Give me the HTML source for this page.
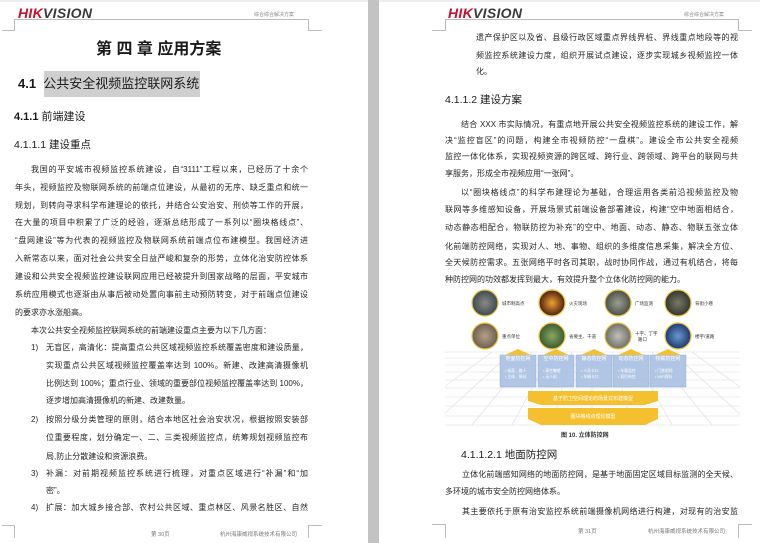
<!DOCTYPE html>
<html><head><meta charset="utf-8">
<style>
*{margin:0;padding:0;box-sizing:border-box}
body{width:760px;height:543px;background:#fff;position:relative;overflow:hidden;font-family:"Liberation Sans","Noto Sans CJK SC",sans-serif;color:#222}
.gap{position:absolute;left:368px;top:0;width:11px;height:543px;background:#c3c3c3}
.topbar{position:absolute;left:0;top:0;width:760px;height:2px;background:#eee}
.l{position:absolute;white-space:nowrap;font-size:8px;line-height:10px;text-align:justify;text-align-last:justify;color:#262626}
.n{text-align-last:left}
.logo{position:absolute;font-family:"Liberation Sans",sans-serif;font-weight:bold;font-style:italic;font-size:14px;letter-spacing:0.3px;line-height:14px}
.logo .r{color:#c8102e}.logo .g{color:#3a3a3a}
.ht{position:absolute;font-size:5px;color:#888;line-height:6px}
.hl{position:absolute;background:#bbb}
.ft{position:absolute;font-size:5.5px;color:#777;line-height:7px}
.h{position:absolute;white-space:nowrap;color:#1a1a1a}
</style></head><body>
<div class="topbar"></div>
<div class="gap"></div>

<!-- LEFT HEADER -->
<div class="logo" style="left:18px;top:6px"><span class="r">HIK</span><span class="g">VISION</span></div>
<div class="ht" style="left:254px;top:12px">综合综合解决方案</div>
<div class="hl" style="left:14px;top:19px;width:295px;height:1px"></div>
<div class="hl" style="left:14px;top:19px;width:1px;height:11px"></div>
<div class="hl" style="left:308px;top:19px;width:1px;height:11px"></div>
<div class="hl" style="left:2px;top:30px;width:13px;height:1px"></div>
<div class="hl" style="left:308px;top:30px;width:14px;height:1px"></div>

<div class="h" style="left:96px;top:40px;font-size:16px;font-weight:bold;line-height:20px">第 四 章 应用方案</div>
<div style="position:absolute;left:44px;top:71px;width:156px;height:26px;background:#cfcfcf"></div>
<div class="h" style="left:18px;top:76px;font-size:13px;line-height:16px"><b>4.1</b>&nbsp;&nbsp;公共安全视频监控联网系统</div>
<div class="h" style="left:14px;top:110px;font-size:11px;line-height:14px"><b>4.1.1</b> 前端建设</div>
<div class="h" style="left:14px;top:138px;font-size:10.5px;line-height:14px">4.1.1.1 建设重点</div>

<div class="l" style="left:31px;top:165px;width:277px">我国的平安城市视频监控系统建设，自“3111”工程以来，已经历了十余个</div>
<div class="l" style="left:15px;top:183px;width:293px">年头，视频监控及物联网系统的前端点位建设，从最初的无序、缺乏重点和统一</div>
<div class="l" style="left:15px;top:201px;width:293px">规划，到转向寻求科学布建理论的依托，并结合公安治安、刑侦等工作的开展，</div>
<div class="l" style="left:15px;top:218px;width:293px">在大量的项目中积累了广泛的经验，逐渐总结形成了一系列以“圈块格线点”、</div>
<div class="l" style="left:15px;top:236px;width:293px">“盘网建设”等为代表的视频监控及物联网系统前端点位布建模型。我国经济进</div>
<div class="l" style="left:15px;top:254px;width:293px">入新常态以来，面对社会公共安全日益严峻和复杂的形势，立体化治安防控体系</div>
<div class="l" style="left:15px;top:272px;width:293px">建设和公共安全视频监控建设联网应用已经被提升到国家战略的层面，平安城市</div>
<div class="l" style="left:15px;top:290px;width:293px">系统应用模式也逐渐由从事后被动处置向事前主动预防转变，对于前端点位建设</div>
<div class="l n" style="left:15px;top:308px">的要求亦水涨船高。</div>
<div class="l n" style="left:31px;top:326px">本次公共安全视频监控联网系统的前端建设重点主要为以下几方面：</div>
<div class="l n" style="left:31px;top:343px">1)</div>
<div class="l" style="left:46px;top:343px;width:262px">无盲区，高清化：提高重点公共区域视频监控系统覆盖密度和建设质量，</div>
<div class="l" style="left:46px;top:361px;width:262px">实现重点公共区域视频监控覆盖率达到 100%。新建、改建高清摄像机</div>
<div class="l" style="left:46px;top:379px;width:262px">比例达到 100%；重点行业、领域的重要部位视频监控覆盖率达到 100%，</div>
<div class="l n" style="left:46px;top:396px">逐步增加高清摄像机的新建、改建数量。</div>
<div class="l n" style="left:31px;top:415px">2)</div>
<div class="l" style="left:46px;top:415px;width:262px">按照分级分类管理的原则，结合本地区社会治安状况，根据按照安装部</div>
<div class="l" style="left:46px;top:433px;width:262px">位重要程度，划分确定一、二、三类视频监控点，统筹规划视频监控布</div>
<div class="l n" style="left:46px;top:452px">局,防止分散建设和资源浪费。</div>
<div class="l n" style="left:31px;top:469px">3)</div>
<div class="l" style="left:46px;top:469px;width:262px">补漏：对前期视频监控系统进行梳理，对重点区域进行“补漏”和“加</div>
<div class="l n" style="left:46px;top:486px">密”。</div>
<div class="l n" style="left:31px;top:503px">4)</div>
<div class="l" style="left:46px;top:503px;width:262px">扩展：加大城乡接合部、农村公共区域、重点林区、风景名胜区、自然</div>

<div class="hl" style="left:2px;top:525px;width:13px;height:1px"></div>
<div class="hl" style="left:14px;top:525px;width:1px;height:13px"></div>
<div class="hl" style="left:308px;top:525px;width:14px;height:1px"></div>
<div class="hl" style="left:308px;top:525px;width:1px;height:13px"></div>
<div class="ft" style="left:151px;top:532px">第 30页</div>
<div class="ft" style="left:220px;top:532px">杭州海康威视系统技术有限公司</div>

<!-- RIGHT HEADER -->
<div class="logo" style="left:448px;top:6px"><span class="r">HIK</span><span class="g">VISION</span></div>
<div class="ht" style="left:684px;top:12px">综合综合解决方案</div>
<div class="hl" style="left:445px;top:19px;width:294px;height:1px"></div>
<div class="hl" style="left:445px;top:19px;width:1px;height:11px"></div>
<div class="hl" style="left:738px;top:19px;width:1px;height:11px"></div>
<div class="hl" style="left:432px;top:30px;width:14px;height:1px"></div>
<div class="hl" style="left:738px;top:30px;width:14px;height:1px"></div>

<div class="l" style="left:476px;top:33px;width:262px">遗产保护区以及省、县级行政区域重点界线界桩、界线重点地段等的视</div>
<div class="l" style="left:476px;top:51px;width:262px">频监控系统建设力度，组织开展试点建设，逐步实现城乡视频监控一体</div>
<div class="l n" style="left:476px;top:67px">化。</div>
<div class="h" style="left:445px;top:93px;font-size:10.5px;line-height:14px">4.1.1.2 建设方案</div>
<div class="l" style="left:461px;top:120px;width:277px">结合 XXX 市实际情况，有重点地开展公共安全视频监控系统的建设工作，解</div>
<div class="l" style="left:445px;top:136px;width:293px">决“监控盲区”的问题，构建全市视频防控“一盘棋”。建设全市公共安全视频</div>
<div class="l" style="left:445px;top:152px;width:293px">监控一体化体系，实现视频资源的跨区域、跨行业、跨领域、跨平台的联网与共</div>
<div class="l n" style="left:445px;top:169px">享服务，形成全市视频应用“一张网”。</div>
<div class="l" style="left:461px;top:188px;width:277px">以“圈块格线点”的科学布建理论为基础，合理运用各类前沿视频监控及物</div>
<div class="l" style="left:445px;top:205px;width:293px">联网等多维感知设备，开展场景式前端设备部署建设，构建“空中地面相结合，</div>
<div class="l" style="left:445px;top:223px;width:293px">动态静态相配合，物联防控为补充”的空中、地面、动态、静态、物联五张立体</div>
<div class="l" style="left:445px;top:242px;width:293px">化前端防控网络，实现对人、地、事物、组织的多维度信息采集，解决全方位、</div>
<div class="l" style="left:445px;top:258px;width:293px">全天候防控需求。五张网络平时各司其职，战时协同作战，通过有机结合，将每</div>
<div class="l n" style="left:445px;top:275px">种防控网的功效都发挥到最大，有效提升整个立体化防控网的能力。</div>

<svg style="position:absolute;left:445px;top:288px" width="295" height="142" viewBox="0 0 295 142" font-family="Liberation Sans,Noto Sans CJK SC,sans-serif">
<defs>
<radialGradient id="c1"><stop offset="0" stop-color="#8a8a80"/><stop offset="1" stop-color="#3c4a55"/></radialGradient>
<radialGradient id="c2"><stop offset="0" stop-color="#f2a030"/><stop offset="1" stop-color="#4a2010"/></radialGradient>
<radialGradient id="c3"><stop offset="0" stop-color="#9aa090"/><stop offset="1" stop-color="#4a5048"/></radialGradient>
<radialGradient id="c4"><stop offset="0" stop-color="#7a7868"/><stop offset="1" stop-color="#303830"/></radialGradient>
<radialGradient id="c5"><stop offset="0" stop-color="#b8a088"/><stop offset="1" stop-color="#6a6050"/></radialGradient>
<radialGradient id="c6"><stop offset="0" stop-color="#8aa860"/><stop offset="1" stop-color="#3a5a30"/></radialGradient>
<radialGradient id="c7"><stop offset="0" stop-color="#c0c0b8"/><stop offset="1" stop-color="#707068"/></radialGradient>
<radialGradient id="c8"><stop offset="0" stop-color="#6a9ad0"/><stop offset="1" stop-color="#1a3a70"/></radialGradient>
</defs>
<g stroke="#dcdcdc" stroke-width="0.6">
<line x1="0" y1="64" x2="295" y2="64"/><line x1="0" y1="70" x2="295" y2="70"/><line x1="0" y1="77" x2="295" y2="77"/><line x1="0" y1="84" x2="295" y2="84"/><line x1="0" y1="92" x2="295" y2="92"/><line x1="0" y1="100" x2="295" y2="100"/><line x1="0" y1="109" x2="295" y2="109"/><line x1="0" y1="118" x2="295" y2="118"/><line x1="0" y1="128" x2="295" y2="128"/><line x1="0" y1="137" x2="295" y2="137"/>
<line x1="147" y1="64" x2="147" y2="137"/><line x1="127" y1="64" x2="107" y2="137"/><line x1="107" y1="64" x2="67" y2="137"/><line x1="87" y1="64" x2="27" y2="137"/><line x1="67" y1="64" x2="-13" y2="137"/><line x1="47" y1="64" x2="-53" y2="137"/><line x1="167" y1="64" x2="187" y2="137"/><line x1="187" y1="64" x2="227" y2="137"/><line x1="207" y1="64" x2="267" y2="137"/><line x1="227" y1="64" x2="307" y2="137"/><line x1="247" y1="64" x2="347" y2="137"/>
</g>
<g stroke="#f0c040" stroke-width="1.2">
<circle cx="40" cy="15" r="13" fill="url(#c1)"/><circle cx="107" cy="15" r="13" fill="url(#c2)"/><circle cx="173" cy="15" r="13" fill="url(#c3)"/><circle cx="233" cy="15" r="13" fill="url(#c4)"/>
<circle cx="40" cy="48" r="13" fill="url(#c5)"/><circle cx="107" cy="48" r="13" fill="url(#c6)"/><circle cx="173" cy="48" r="13" fill="url(#c7)"/><circle cx="233" cy="48" r="13" fill="url(#c8)"/>
</g>
<g font-size="4.5" fill="#333">
<text x="57" y="17">城市制高点</text><text x="124" y="17">火灾现场</text><text x="190" y="17">广场监测</text><text x="250" y="17">背街小巷</text>
<text x="57" y="50">重点单位</text><text x="124" y="50">省要主、干道</text><text x="190" y="47">十字、丁字</text><text x="193" y="53">路口</text><text x="250" y="50">楼宇/道路</text>
</g>
<g fill="#a9c0e2" stroke="#8aa6d0" stroke-width="0.5" opacity="0.9">
<rect x="55" y="67" width="36" height="32"/><rect x="93" y="67" width="36" height="32"/><rect x="131" y="67" width="36" height="32"/><rect x="168" y="67" width="36" height="32"/><rect x="205" y="67" width="36" height="32"/>
</g>
<g fill="#f5c030">
<polygon points="60,67 73,61 86,67"/><polygon points="98,67 111,61 124,67"/><polygon points="136,67 149,61 162,67"/><polygon points="173,67 186,61 199,67"/><polygon points="210,67 223,61 236,67"/>
<polygon points="83,103 213,103 213,113 200,117 96,117 83,113"/>
<polygon points="83,120 213,120 213,131 200,137 96,137 83,131"/>
</g>
<g font-size="5" fill="#fff" text-anchor="middle">
<text x="73" y="72">地面防控网</text><text x="111" y="72">空中防控网</text><text x="149" y="72">静态防控网</text><text x="186" y="72">动态防控网</text><text x="223" y="72">物联防控网</text>
<text x="148" y="112">基于防卫空间理论的场景式布建模型</text><text x="148" y="130">圈块格线点理论模型</text>
</g>
<g font-size="3.8" fill="#fff">
<text x="60" y="84">• 街面、路人</text><text x="60" y="90">• 主体、驿站</text>
<text x="98" y="84">• 高空瞭望</text><text x="98" y="90">• 无人机</text>
<text x="136" y="84">• 人员卡口</text><text x="136" y="90">• 车辆卡口</text>
<text x="173" y="84">• 车载监控</text><text x="173" y="90">• 双目布控</text>
<text x="210" y="84">• 门禁视频</text><text x="210" y="90">• WiFi探针</text>
</g>
</svg>

<div class="h" style="left:561px;top:432px;font-size:6px;line-height:8px;font-weight:bold;color:#333">图 10. 立体防控网</div>
<div class="h" style="left:461px;top:448px;font-size:10.5px;line-height:14px">4.1.1.2.1 地面防控网</div>
<div class="l" style="left:462px;top:470px;width:276px">立体化前端感知网络的地面防控网，是基于地面固定区域目标监测的全天候、</div>
<div class="l n" style="left:445px;top:487px">多环境的城市安全防控网络体系。</div>
<div class="l" style="left:462px;top:507px;width:276px">其主要依托于原有治安监控系统前端摄像机网络进行构建，对现有的治安监</div>

<div class="hl" style="left:432px;top:524px;width:14px;height:1px"></div>
<div class="hl" style="left:445px;top:524px;width:1px;height:14px"></div>
<div class="hl" style="left:738px;top:524px;width:14px;height:1px"></div>
<div class="hl" style="left:738px;top:524px;width:1px;height:14px"></div>
<div class="ft" style="left:578px;top:529px">第 31页</div>
<div class="ft" style="left:648px;top:529px">杭州海康威视系统技术有限公司</div>
</body></html>
